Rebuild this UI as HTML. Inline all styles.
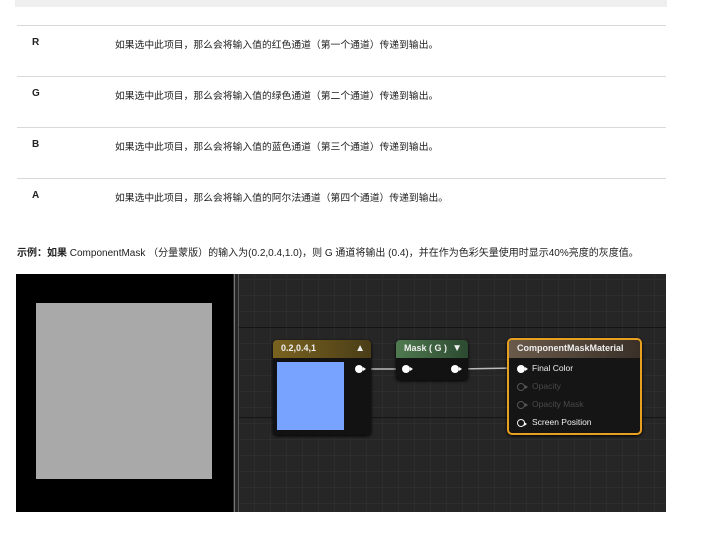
<!DOCTYPE html>
<html><head><meta charset="utf-8"><style>
*{margin:0;padding:0;box-sizing:border-box}
body{width:720px;height:548px;background:#fff;position:relative;overflow:hidden;font-family:"Liberation Sans","Noto Sans CJK SC",sans-serif;color:#222}
.abs{position:absolute}
.line{position:absolute;left:17px;width:649px;height:1px;background:#d9d9d9}
.k{position:absolute;left:32px;font-size:10px;font-weight:bold}
.v{position:absolute;left:115px;font-size:9.8px}
.node{position:absolute;background:#121212;border-radius:4px;box-shadow:0 1px 3px #000}
.hd{height:18px;border-radius:4px 4px 0 0;color:#eee;font-size:9px;font-weight:bold;padding:3px 8px;white-space:nowrap}
.pin{position:absolute;width:8px;height:8px;border-radius:50%;background:#fff}
.pin:after{content:"";position:absolute;right:-3px;top:2px;border-left:3px solid #fff;border-top:2px solid transparent;border-bottom:2px solid transparent}
.pin.off{background:none;border:1.3px solid #555}
.pin.off:after{border-left-color:#555;right:-4px;top:1px}
.pin.ring{background:none;border:1.6px solid #eee}
.pl{position:absolute;left:23px;font-size:8.5px;color:#eee}
.tri{position:absolute;right:6px;top:3px;font-size:10px}
</style></head><body>
<div class="abs" style="left:15px;top:0;width:652px;height:7px;background:#efefef"></div>
<div class="line" style="top:25px"></div>
<div class="line" style="top:76px"></div>
<div class="line" style="top:127px"></div>
<div class="line" style="top:178px"></div>
<div class="k" style="top:37px">R</div><div class="v" style="top:37px">如果选中此项目，那么会将输入值的红色通道（第一个通道）传递到输出。</div>
<div class="k" style="top:88px">G</div><div class="v" style="top:88px">如果选中此项目，那么会将输入值的绿色通道（第二个通道）传递到输出。</div>
<div class="k" style="top:139px">B</div><div class="v" style="top:139px">如果选中此项目，那么会将输入值的蓝色通道（第三个通道）传递到输出。</div>
<div class="k" style="top:190px">A</div><div class="v" style="top:190px">如果选中此项目，那么会将输入值的阿尔法通道（第四个通道）传递到输出。</div>
<div class="abs" style="left:17px;top:244px;font-size:10px;white-space:nowrap"><b>示例：如果</b> ComponentMask （分量蒙版）的输入为(0.2,0.4,1.0)，则 G 通道将输出 (0.4)，并在作为色彩矢量使用时显示40%亮度的灰度值。</div>

<div class="abs" style="left:16px;top:274px;width:650px;height:238px;background:#262626;overflow:hidden">
 <div class="abs" style="left:222px;top:0;width:428px;height:238px;background-image:linear-gradient(#2d2d2d 1px,transparent 1px),linear-gradient(90deg,#2d2d2d 1px,transparent 1px);background-size:16px 16px;background-position:0 5px"></div>
 <div class="abs" style="left:222px;top:53px;width:428px;height:1px;background:#141414"></div>
 <div class="abs" style="left:222px;top:143px;width:428px;height:1px;background:#141414"></div>
 <div class="abs" style="left:0;top:0;width:217px;height:238px;background:#000"></div>
 <div class="abs" style="left:218px;top:0;width:1px;height:238px;background:#777"></div>
 <div class="abs" style="left:222px;top:0;width:1px;height:238px;background:#555"></div>
 <div class="abs" style="left:20px;top:29px;width:176px;height:176px;background:#a9a9a9"></div>
</div>
<svg class="abs" style="left:0;top:0" width="720" height="548"><path d="M362 369 L400 369 M458 369 L515 368" stroke="#bbb" stroke-width="1.5" fill="none"/></svg>

<div class="node" style="left:273px;top:340px;width:98px;height:95px">
 <div class="hd" style="background:linear-gradient(90deg,#7a6320,#4a3d17)">0.2,0.4,1<span class="tri">▲</span></div>
 <div class="abs" style="left:4px;top:22px;width:67px;height:68px;background:#78a3ff"></div>
 <div class="pin" style="left:82px;top:25px"></div>
</div>
<div class="node" style="left:396px;top:340px;width:72px;height:40px">
 <div class="hd" style="background:linear-gradient(90deg,#4f7a50,#2c4a30);text-align:left">Mask ( G )<span class="tri">▼</span></div>
 <div class="pin" style="left:6px;top:25px"></div>
 <div class="pin" style="left:55px;top:25px"></div>
</div>
<div class="node" style="left:507px;top:338px;width:135px;height:97px;border:2px solid #e8a020;border-radius:5px;background:#151515">
 <div class="hd" style="background:linear-gradient(90deg,#6a5a4a,#3a3028);border-radius:3px 3px 0 0;padding:3px 8px">ComponentMaskMaterial</div>
 <div class="pin" style="left:8px;top:25px"></div><div class="pl" style="top:23px">Final Color</div>
 <div class="pin off" style="left:8px;top:43px"></div><div class="pl" style="top:41px;color:#4a4a4a">Opacity</div>
 <div class="pin off" style="left:8px;top:61px"></div><div class="pl" style="top:59px;color:#4a4a4a">Opacity Mask</div>
 <div class="pin ring" style="left:8px;top:79px"></div><div class="pl" style="top:77px">Screen Position</div>
</div>
</body></html>
